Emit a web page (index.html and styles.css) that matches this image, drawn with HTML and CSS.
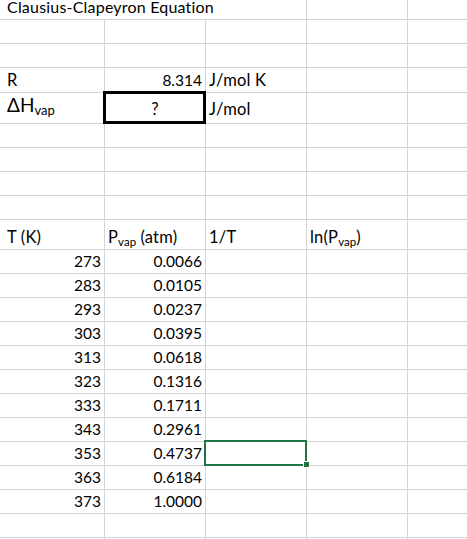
FILE: index.html
```html
<!DOCTYPE html>
<html>
<head>
<meta charset="utf-8">
<link rel="stylesheet" href="styles.css">
</head>
<body>
<div class="sheet">
  <div class="row r-title">
    <div class="c"></div>
    <div class="c title"><span>Clausius-Clapeyron Equation</span></div>
    <div class="c"></div><div class="c"></div>
  </div>
  <div class="row"><div class="c"></div><div class="c"></div><div class="c"></div><div class="c"></div><div class="c"></div><div class="c"></div></div>
  <div class="row"><div class="c"></div><div class="c"></div><div class="c"></div><div class="c"></div><div class="c"></div><div class="c"></div></div>
  <div class="row r-r">
    <div class="c"></div>
    <div class="c"><span>R</span></div>
    <div class="c num"><span>8.314</span></div>
    <div class="c"><span>J/mol K</span></div>
    <div class="c"></div><div class="c"></div>
  </div>
  <div class="row r-dh">
    <div class="c"></div>
    <div class="c dh"><span>ΔH<sub class="sub-dh">vap</sub></span></div>
    <div class="c center boxed"><span>?</span></div>
    <div class="c"><span>J/mol</span></div>
    <div class="c"></div><div class="c"></div>
  </div>
  <div class="row"><div class="c"></div><div class="c"></div><div class="c"></div><div class="c"></div><div class="c"></div><div class="c"></div></div>
  <div class="row"><div class="c"></div><div class="c"></div><div class="c"></div><div class="c"></div><div class="c"></div><div class="c"></div></div>
  <div class="row"><div class="c"></div><div class="c"></div><div class="c"></div><div class="c"></div><div class="c"></div><div class="c"></div></div>
  <div class="row"><div class="c"></div><div class="c"></div><div class="c"></div><div class="c"></div><div class="c"></div><div class="c"></div></div>
  <div class="row r-head">
    <div class="c"></div>
    <div class="c"><span>T (K)</span></div>
    <div class="c"><span>P<sub>vap</sub> (atm)</span></div>
    <div class="c"><span>1/T</span></div>
    <div class="c"><span>ln(P<sub>vap</sub>)</span></div>
    <div class="c"></div>
  </div>
  <div class="row"><div class="c"></div><div class="c num">273</div><div class="c num">0.0066</div><div class="c"></div><div class="c"></div><div class="c"></div></div>
  <div class="row"><div class="c"></div><div class="c num">283</div><div class="c num">0.0105</div><div class="c"></div><div class="c"></div><div class="c"></div></div>
  <div class="row"><div class="c"></div><div class="c num">293</div><div class="c num">0.0237</div><div class="c"></div><div class="c"></div><div class="c"></div></div>
  <div class="row"><div class="c"></div><div class="c num">303</div><div class="c num">0.0395</div><div class="c"></div><div class="c"></div><div class="c"></div></div>
  <div class="row"><div class="c"></div><div class="c num">313</div><div class="c num">0.0618</div><div class="c"></div><div class="c"></div><div class="c"></div></div>
  <div class="row"><div class="c"></div><div class="c num">323</div><div class="c num">0.1316</div><div class="c"></div><div class="c"></div><div class="c"></div></div>
  <div class="row"><div class="c"></div><div class="c num">333</div><div class="c num">0.1711</div><div class="c"></div><div class="c"></div><div class="c"></div></div>
  <div class="row"><div class="c"></div><div class="c num">343</div><div class="c num">0.2961</div><div class="c"></div><div class="c"></div><div class="c"></div></div>
  <div class="row"><div class="c"></div><div class="c num">353</div><div class="c num">0.4737</div><div class="c selected"><span class="handle"></span></div><div class="c"></div><div class="c"></div></div>
  <div class="row"><div class="c"></div><div class="c num">363</div><div class="c num">0.6184</div><div class="c"></div><div class="c"></div><div class="c"></div></div>
  <div class="row"><div class="c"></div><div class="c num">373</div><div class="c num">1.0000</div><div class="c"></div><div class="c"></div><div class="c"></div></div>
  <div class="row"><div class="c"></div><div class="c"></div><div class="c"></div><div class="c"></div><div class="c"></div><div class="c"></div></div>
  <div class="row"><div class="c"></div><div class="c"></div><div class="c"></div><div class="c"></div><div class="c"></div><div class="c"></div></div>
</div>
</body>
</html>
```
FILE: styles.css
```css
html, body {
  margin: 0;
  padding: 0;
  overflow: hidden;
  background: #fff;
}

.sheet {
  display: grid;
  grid-template-columns: 3px repeat(4, 100px) 59px;
  grid-template-rows: 19px 23px 23px 24px 30px repeat(4, 23px) 29px repeat(12, 23px) 23px;
  gap: 1px;
  background: #d4d4d4;
  width: 467px;
  height: 539px;
  overflow: hidden;
  font-family: Lato, "Liberation Sans", sans-serif;
  font-size: 16.5px;
  letter-spacing: 0.2px;
  color: #000;
}

.row {
  display: contents;
}

.c {
  background: #fff;
  display: flex;
  align-items: flex-end;
  padding: 0 3px 3px;
  line-height: 18px;
  white-space: nowrap;
  min-width: 0;
  position: relative;
}

.num {
  justify-content: flex-end;
  font-size: 15.5px;
  letter-spacing: 0;
}

.center {
  justify-content: center;
}

.title {
  grid-column: span 3;
  font-size: 16px;
  letter-spacing: 0.2px;
  line-height: 14px;
  padding-bottom: 5px;
}

.r-dh .c {
  padding-bottom: 5px;
}

.r-dh .dh {
  padding-bottom: 8px;
  font-size: 19px;
  line-height: 20px;
  letter-spacing: 0;
}

sub {
  font-size: 11.5px;
  line-height: 0;
  vertical-align: -3px;
  letter-spacing: 0;
}

.r-dh .sub-dh {
  font-size: 13px;
  vertical-align: -3px;
}

.r-head .c {
  padding-bottom: 3px;
}

.boxed::after {
  content: "";
  position: absolute;
  left: -2px;
  top: -2px;
  right: -1px;
  bottom: -1px;
  border: 3px solid #000;
  pointer-events: none;
}

.selected::after {
  content: "";
  position: absolute;
  left: -2px;
  top: -2px;
  right: -1px;
  bottom: -1px;
  border: 2px solid #217346;
  z-index: 1;
}

.handle {
  position: absolute;
  left: 97px;
  top: 19px;
  width: 5px;
  height: 5px;
  background: #217346;
  border: 1px solid #fff;
  z-index: 2;
}
```
